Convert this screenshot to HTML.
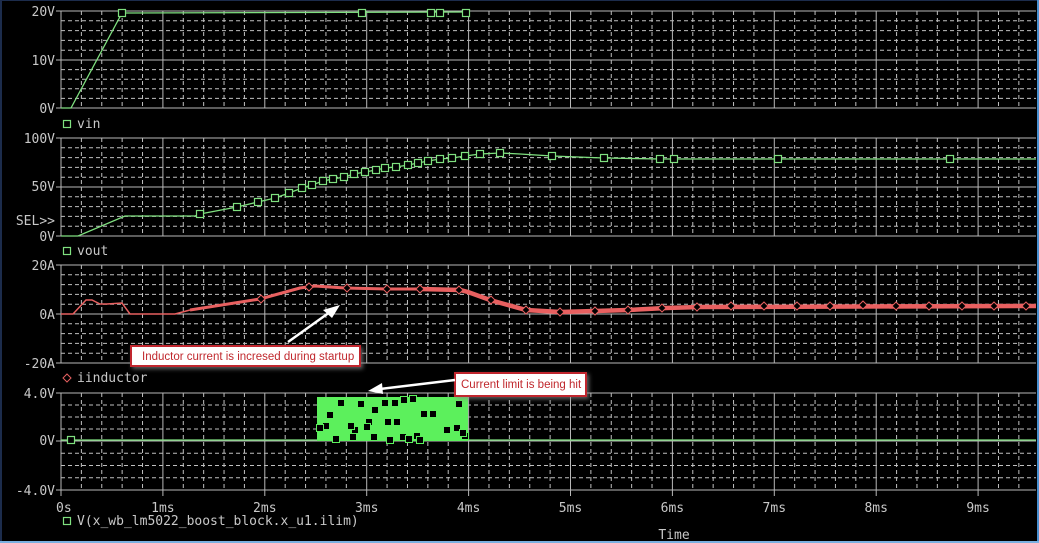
<!DOCTYPE html>
<html><head><meta charset="utf-8">
<style>
html,body{margin:0;padding:0;background:#000;width:1039px;height:543px;overflow:hidden}
svg{display:block}
text{font-family:"DejaVu Sans Mono","Liberation Mono",monospace;font-size:13px;fill:#c8c8c8;font-weight:normal}
.ann{font-family:"Liberation Sans",sans-serif;font-size:11.5px;fill:#c0282d;font-weight:normal}
</style></head><body>
<svg id="s" width="1039" height="543" viewBox="0 0 1039 543" xmlns="http://www.w3.org/2000/svg">
<rect width="1039" height="543" fill="#000"/>
<g id="grid"></g>
<g id="labels"></g>
<polyline points="61,108 71,108 122,13 469,12" fill="none" stroke="#7fe07f" stroke-width="1.3"/>
<polyline fill="none" stroke="#7fe07f" stroke-width="1.3" points="61,236 78,236 125,216 195,216 200,214 237,207 258,202 275,198 289,193 302,188 312,185 323,181 333,179 344,177 354,174 365,172 376,170 385,168 396,167 408,165 418,163 428,161 440,159 452,158 465,156 480,154 500,153 520,154 552,156 604,158 660,159 676,159 778,159 950,159 1036,159"/>
<polyline fill="none" stroke="#e86060" stroke-width="1.5" points="61,314 73,314 86,300 92,300 100,304 107,304 122,303 130,314 175,314 190,310"/>
<polyline fill="none" stroke="#e86060" stroke-width="3" stroke-linejoin="round" points="190,310 260,299 300,288 315,286 345,288 385,289 420,289 460,290 468,292 490,300 526,310 560,312 595,311 628,310 666,308 700,307 1036,306"/>
<polyline fill="none" stroke="#e86060" stroke-width="4.5" points="420,289 460,290 468,292 490,300 526,310 560,312 595,311 628,310 666,308 700,307 1036,306"/>
<line x1="61" y1="440" x2="1036" y2="440" stroke="#7fe07f" stroke-width="1.3"/>
<rect x="317" y="397" width="151" height="44" fill="#5cf05c"/>
<g id="mk"></g>
<g filter="url(#sh)">
<rect x="131" y="346" width="229" height="20" fill="#fff" stroke="#c0282d" stroke-width="2"/>
<rect x="455" y="373" width="131" height="23" fill="#fff" stroke="#c0282d" stroke-width="2"/>
</g>
<defs><filter id="sh" x="-10%" y="-30%" width="130%" height="180%"><feDropShadow dx="2" dy="2" stdDeviation="2" flood-color="#888" flood-opacity="0.7"/></filter></defs>
<text class="ann" x="142" y="360">Inductor current is incresed during startup</text>
<text class="ann" x="461" y="388">Current limit is being hit</text>
<line x1="288" y1="342" x2="330" y2="312" stroke="#fff" stroke-width="2.5"/>
<polygon points="340,305 323,310 332,318" fill="#fff"/>
<line x1="455" y1="380" x2="380" y2="389" stroke="#fff" stroke-width="2.5"/>
<polygon points="368,391 382,383 383,394" fill="#fff"/>
<rect x="0" y="0" width="2" height="543" fill="#1c2c4c"/>
<rect x="0" y="0" width="1039" height="1" fill="#1c2c4c"/>
<rect x="1037" y="0" width="2" height="543" fill="#4a90d0"/>
<rect x="0" y="541" width="1039" height="2" fill="#7ab0e0"/>
</svg>
<script>
var g=document.getElementById('grid'),L=document.getElementById('labels'),M=document.getElementById('mk');
var h='',l='',m='';
function ln(x1,y1,x2,y2,d){h+='<line x1="'+x1+'" y1="'+y1+'" x2="'+x2+'" y2="'+y2+'" stroke="'+(d?'#c0c0c0':'#b8b8b8')+'" stroke-width="1" '+(d?'stroke-dasharray="4,3"':'')+'/>';}
var X0=61,X1=1036,pms=101.9;
var plots=[[11,60,108,5],[138,187,236,5],[265,314,363,5],[393,441,490,4]];
plots.forEach(function(p){
 var t=p[0],c=p[1],b=p[2],n=p[3];
 for(var i=1;i<n;i++){ln(X0,t+(c-t)*i/n,X1,t+(c-t)*i/n,1);ln(X0,c+(b-c)*i/n,X1,c+(b-c)*i/n,1);}
 for(var k=1;k<48;k++){var x=X0+k*pms/5;if(x>X1)break;if(k%5==0)ln(x,t,x,b,0);else ln(x,t,x,b,1);}
 ln(X0,t,X1,t,0);ln(X0,c,X1,c,0);ln(X0,b,X1,b,0);ln(X0,t,X0,b,0);
 ln(56,t,61,t,0);ln(56,c,61,c,0);ln(56,b,61,b,0);
});
for(var k=0;k<10;k++){var x=X0+k*pms;ln(x,490,x,496,0);}
g.innerHTML=h;
function tx(x,y,s,a){l+='<text x="'+x+'" y="'+y+'"'+(a?' text-anchor="'+a+'"':'')+'>'+s+'</text>';}
tx(55,16,'20V','end');tx(55,65,'10V','end');tx(55,113,'0V','end');
tx(55,143,'100V','end');tx(55,191,'50V','end');tx(55,225,'SEL&gt;&gt;','end');tx(55,241,'0V','end');
tx(55,270,'20A','end');tx(55,319,'0A','end');tx(55,368,'-20A','end');
tx(55,398,'4.0V','end');tx(55,445,'0V','end');tx(55,495,'-4.0V','end');
tx(56,512,'0s');
for(var k=1;k<10;k++)tx(X0+k*pms,512,k+'ms','middle');
tx(77,128,'vin');tx(77,255,'vout');tx(77,382,'iinductor');tx(77,525,'V(x_wb_lm5022_boost_block.x_u1.ilim)');
tx(674,539,'Time','middle');
L.innerHTML=l;
function sq(x,y,c,f){m+='<rect x="'+(x-3.5)+'" y="'+(y-3.5)+'" width="7" height="7" fill="'+(f||'none')+'" stroke="'+c+'" stroke-width="1.2"/>';}
function dm(x,y){m+='<polygon points="'+x+','+(y-4)+' '+(x+4)+','+y+' '+x+','+(y+4)+' '+(x-4)+','+y+'" fill="#000" stroke="#e86060" stroke-width="1"/>';}
sq(67,124,'#7fe07f');sq(67,251,'#7fe07f');dm(67,378);sq(67,521,'#7fe07f');
[122,362,431,440,466].forEach(function(x){sq(x,13,'#7fe07f','#000');});
[[200,214],[237,207],[258,202],[275,198],[289,193],[302,188],[312,185],[323,181],[333,179],[344,177],[354,174],[365,172],[376,170],[385,168],[396,167],[408,165],[418,163],[428,161],[440,159],[452,158],[465,156],[480,154],[500,153],[552,156],[604,158],[660,159],[674,159],[778,159],[950,159]].forEach(function(p){sq(p[0],p[1],'#7fe07f','#000');});
[[261,299],[309,287],[347,288],[387,289],[420,289],[459,290],[491,300],[526,310],[560,312],[595,311],[628,310],[662,308],[697,307],[731,306],[764,306],[797,306],[830,306],[863,305],[896,306],[929,306],[962,306],[994,306],[1026,306]].forEach(function(p){dm(p[0],p[1]);});
sq(71,440,'#7fe07f','#000');
[[341,403],[361,404],[385,403],[395,403],[404,400],[413,399],[459,404],[330,415],[375,410],[424,414],[433,414],[369,422],[388,422],[397,422],[355,430],[326,426],[320,428],[351,426],[367,427],[353,437],[374,437],[403,437],[417,436],[457,428],[465,436],[336,439],[390,440],[409,439],[420,440],[447,430],[463,433]].forEach(function(p){m+='<rect x="'+(p[0]-3.5)+'" y="'+(p[1]-3.5)+'" width="7" height="7" fill="#000" stroke="#5cf05c" stroke-width="1"/>';});
M.innerHTML=m;
</script>
</body></html>
